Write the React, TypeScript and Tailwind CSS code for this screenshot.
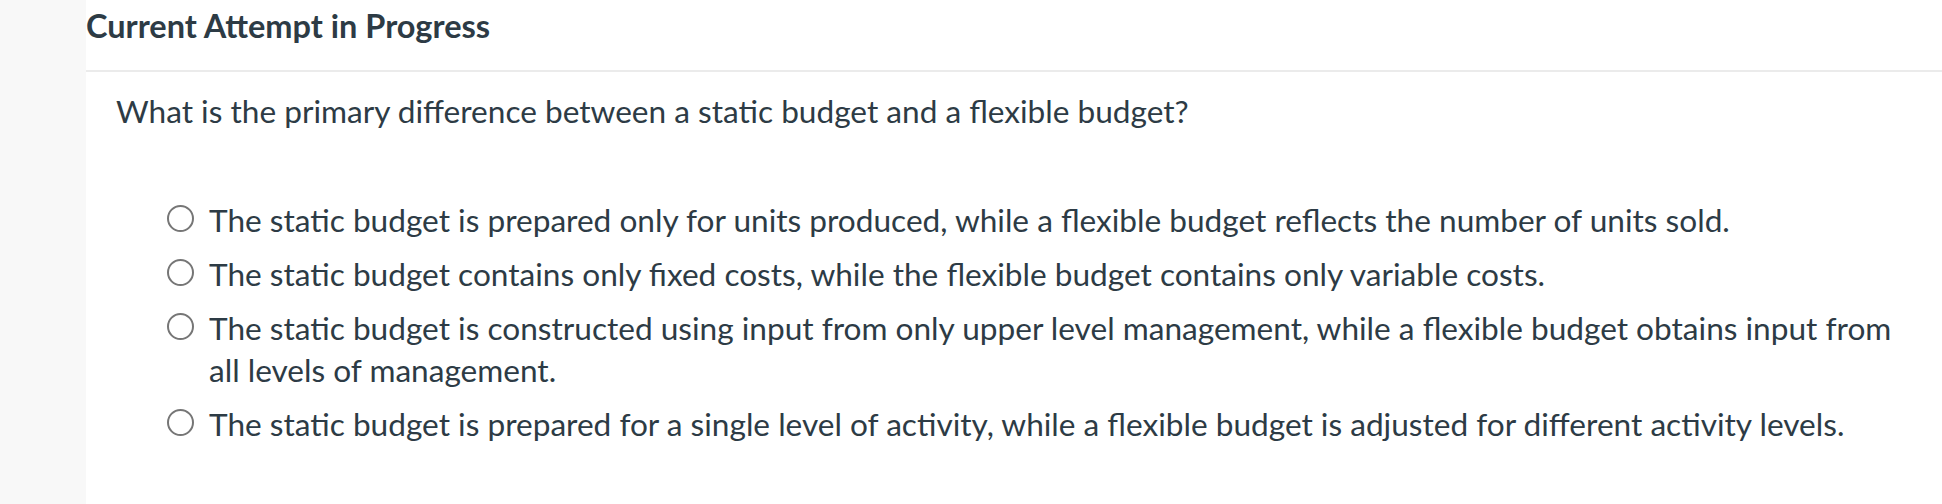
import React from "react";

const options = [
  "The static budget is prepared only for units produced, while a flexible budget reflects the number of units sold.",
  "The static budget contains only fixed costs, while the flexible budget contains only variable costs.",
  "The static budget is constructed using input from only upper level management, while a flexible budget obtains input from all levels of management.",
  "The static budget is prepared for a single level of activity, while a flexible budget is adjusted for different activity levels.",
];

export default function App() {
  return (
    <div
      className="flex h-[504px] w-full bg-white text-[#2d3b45]"
      style={{ fontFamily: "Lato, 'Open Sans', sans-serif" }}
    >
      <div className="w-[86px] shrink-0 bg-[#f8f8f8]" />
      <div className="flex-1 min-w-0">
        <div className="h-[72px] border-b-2 border-[#ebebeb] pt-[8px]">
          <h1 className="text-[32.5px] leading-[36px] font-bold">Current Attempt in Progress</h1>
        </div>
        <div className="pl-[30px] pr-[32px] pt-[18px]">
          <p className="text-[31.6px] leading-[42px]">
            What is the primary difference between a static budget and a flexible budget?
          </p>
          <div className="mt-[67px] pl-[51px] flex flex-col gap-[12px]">
            {options.map((o, i) => (
              <label key={i} className="flex items-start gap-[15px]">
                <span className="mt-[6px] w-[27px] h-[27px] shrink-0 rounded-full border-2 border-[#767676] bg-white" />
                <span className="text-[31.6px] leading-[42px]">{o}</span>
              </label>
            ))}
          </div>
        </div>
      </div>
    </div>
  );
}
